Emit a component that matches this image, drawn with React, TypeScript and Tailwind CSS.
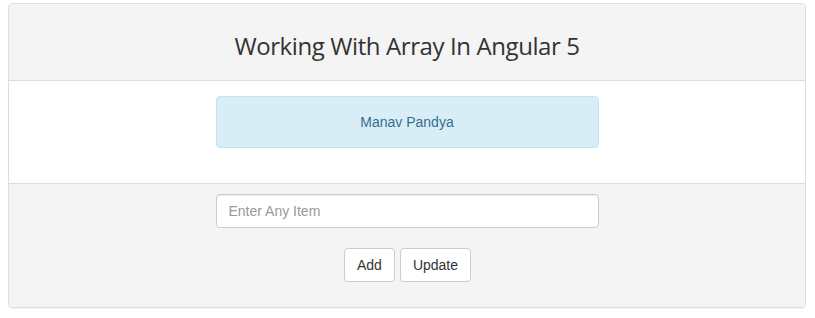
import { useState } from "react";

function AlertItem({ text }: { text: string }) {
  return (
    <div className="w-[383px] h-[52px] mx-auto flex items-center justify-center bg-[#d9edf7] border border-[#bce8f1] rounded-[4px] text-[#31708f] text-[14px]">
      {text}
    </div>
  );
}

function Btn({ label, onClick }: { label: string; onClick?: () => void }) {
  return (
    <button
      onClick={onClick}
      className="h-[34px] px-[12px] bg-white border border-[#ccc] rounded-[4px] text-[14px] text-[#333] leading-[20px] cursor-pointer hover:bg-[#e6e6e6]"
    >
      {label}
    </button>
  );
}

export default function App() {
  const [items, setItems] = useState<string[]>(["Manav Pandya"]);
  const [value, setValue] = useState("");

  return (
    <div className="w-[815px] h-[318px] bg-white pt-[3px] pl-[8px] font-['Liberation_Sans',Arial,sans-serif]">
      <div className="w-[798px] border border-[#ddd] rounded-[4px] shadow-[0_1px_1px_rgba(0,0,0,0.05)] overflow-hidden">
        <div className="h-[77px] bg-[#f4f4f4] border-b border-[#ddd] flex items-center justify-center">
          <h2 className="text-[24px] text-[#333] font-['Segoe_UI','Open_Sans',sans-serif] tracking-[-0.4px] pt-[8px]">
            Working With Array In Angular 5
          </h2>
        </div>
        <div className="h-[102px] bg-white pt-[15px] flex flex-col gap-[10px]">
          {items.map((it, i) => (
            <AlertItem key={i} text={it} />
          ))}
        </div>
        <div className="h-[124px] bg-[#f4f4f4] border-t border-[#ddd] pt-[10px] flex flex-col items-center">
          <input
            value={value}
            onChange={(e) => setValue(e.target.value)}
            placeholder="Enter Any Item"
            className="w-[383px] h-[34px] px-[12px] bg-white border border-[#ccc] rounded-[4px] text-[14px] text-[#555] placeholder:text-[#999] outline-none shadow-[inset_0_1px_1px_rgba(0,0,0,0.075)]"
          />
          <div className="flex gap-[5px] mt-[20px] ml-[1px]">
            <Btn
              label="Add"
              onClick={() => {
                if (value) setItems([...items, value]);
                setValue("");
              }}
            />
            <Btn label="Update" />
          </div>
        </div>
      </div>
    </div>
  );
}
